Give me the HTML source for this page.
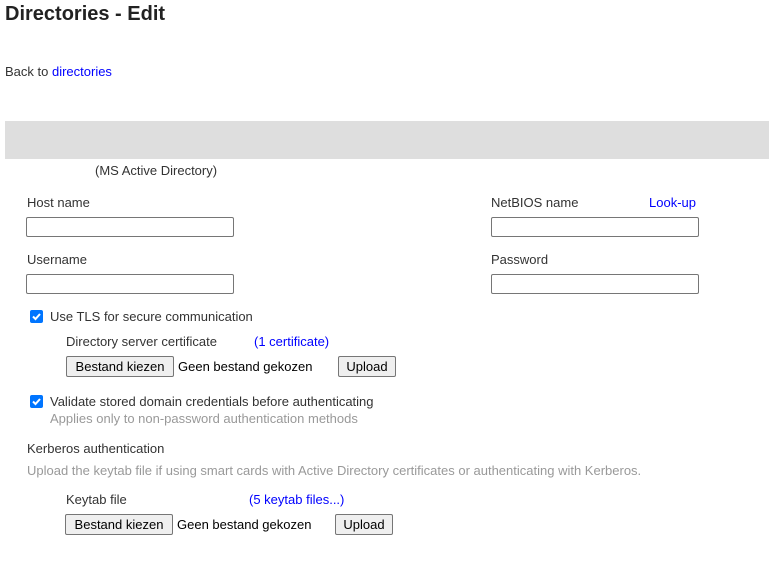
<!DOCTYPE html>
<html><head><style>
body{margin:0;width:769px;height:567px;background:#fff;font-family:"Liberation Sans",sans-serif;font-size:13px;color:#333;position:relative;overflow:hidden}
.a{position:absolute;white-space:nowrap}
.l{color:#00f}
.g{color:#999}
.in{position:absolute;border:1px solid #767676;border-radius:2px;height:19px;background:#fff;box-sizing:border-box}
.btn{position:absolute;background:#efefef;border:1px solid #767676;border-radius:2px;box-sizing:border-box;height:21px;font-size:13px;color:#000;text-align:center;line-height:19px}
.cb{position:absolute;width:13px;height:13px;background:#0075ff;border-radius:2px}
</style></head><body>
<div class="a" style="left:5px;top:3px;font-size:20px;font-weight:bold;color:#222">Directories - Edit</div>
<div class="a" style="left:5px;top:64px">Back to <span class="l">directories</span></div>
<div style="position:absolute;left:5px;top:121px;width:764px;height:38px;background:#dedede"></div>
<div class="a" style="left:95px;top:163px">(MS Active Directory)</div>
<div class="a" style="left:27px;top:195px">Host name</div>
<div class="in" style="left:26px;top:217px;width:208px;height:20px"></div>
<div class="a" style="left:27px;top:252px">Username</div>
<div class="in" style="left:26px;top:274px;width:208px;height:20px"></div>
<div class="a" style="left:491px;top:195px">NetBIOS name</div>
<div class="a l" style="left:649px;top:195px">Look-up</div>
<div class="in" style="left:491px;top:217px;width:208px;height:20px"></div>
<div class="a" style="left:491px;top:252px">Password</div>
<div class="in" style="left:491px;top:274px;width:208px;height:20px"></div>
<div class="cb" style="left:30px;top:310px"><svg width="13" height="13"><path d="M3 6.5l2.5 2.5L10 4" stroke="#fff" stroke-width="2" fill="none"/></svg></div>
<div class="a" style="left:50px;top:309px">Use TLS for secure communication</div>
<div class="a" style="left:66px;top:334px">Directory server certificate</div>
<div class="a l" style="left:254px;top:334px">(1 certificate)</div>
<div class="btn" style="left:66px;top:356px;width:108px">Bestand kiezen</div>
<div class="a" style="left:178px;top:359px;font-size:13px;color:#000">Geen bestand gekozen</div>
<div class="btn" style="left:338px;top:356px;width:58px">Upload</div>
<div class="cb" style="left:30px;top:395px"><svg width="13" height="13"><path d="M3 6.5l2.5 2.5L10 4" stroke="#fff" stroke-width="2" fill="none"/></svg></div>
<div class="a" style="left:50px;top:394px">Validate stored domain credentials before authenticating</div>
<div class="a g" style="left:50px;top:411px">Applies only to non-password authentication methods</div>
<div class="a" style="left:27px;top:441px">Kerberos authentication</div>
<div class="a g" style="left:27px;top:463px">Upload the keytab file if using smart cards with Active Directory certificates or authenticating with Kerberos.</div>
<div class="a" style="left:66px;top:492px">Keytab file</div>
<div class="a l" style="left:249px;top:492px">(5 keytab files...)</div>
<div class="btn" style="left:65px;top:514px;width:108px">Bestand kiezen</div>
<div class="a" style="left:177px;top:517px;font-size:13px;color:#000">Geen bestand gekozen</div>
<div class="btn" style="left:335px;top:514px;width:58px">Upload</div>
</body></html>
